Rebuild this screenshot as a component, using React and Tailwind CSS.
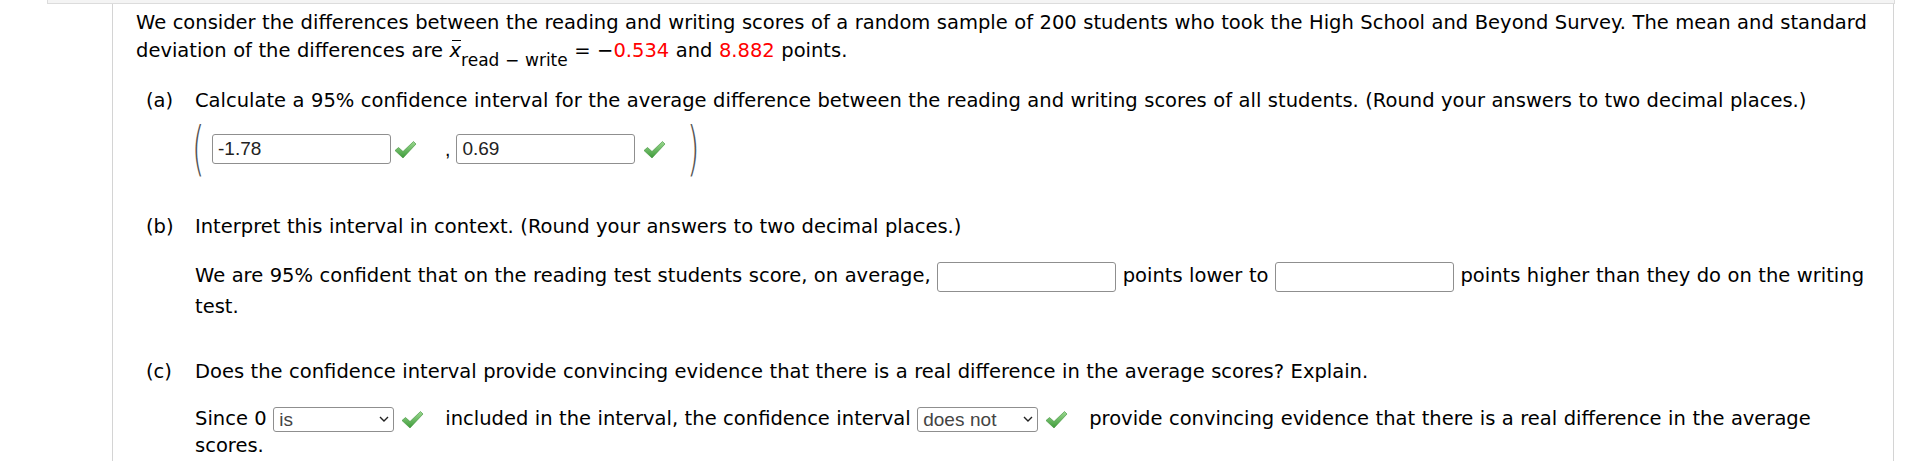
import React from "react";

const Check = () => (
  <svg width="23" height="19" viewBox="0 0 23 19" className="inline-block align-middle">
    <defs>
      <linearGradient id="chk" x1="0" y1="0" x2="0" y2="1">
        <stop offset="0" stopColor="#9ad88f" />
        <stop offset="1" stopColor="#3e9b3a" />
      </linearGradient>
    </defs>
    <path
      d="M1 10.5 L4.5 7.5 L9 11.5 L19.5 1.5 L22 4 L9 18 Z"
      fill="url(#chk)"
      stroke="#3a8f36"
      strokeWidth="0.6"
      strokeLinejoin="round"
    />
  </svg>
);

const TextBox = ({ value }) => (
  <span className="inline-flex items-center align-middle w-[179px] h-[30px] border border-[#8f8f8f] rounded-[3px] bg-white px-[5px] text-[19px] text-[#222] font-['Liberation_Sans',Arial,sans-serif]">
    {value}
  </span>
);

const Dropdown = ({ value }) => (
  <span className="inline-flex items-center justify-between align-middle w-[121px] h-[25px] border border-[#8f8f8f] rounded-[3px] bg-white pl-[5px] pr-[3px] text-[19px] leading-[23px] text-[#444] font-['Liberation_Sans',Arial,sans-serif]">
    <span>{value}</span>
    <svg width="12" height="12" viewBox="0 0 12 12">
      <path d="M2 4 L6 8 L10 4" fill="none" stroke="#222" strokeWidth="1.4" />
    </svg>
  </span>
);

const Part = ({ label, question, children, answerClass }) => (
  <div className="flex">
    <div className="w-[59px] shrink-0 pl-[10px]">{label}</div>
    <div className="flex-1">
      <div>{question}</div>
      <div className={answerClass}>{children}</div>
    </div>
  </div>
);

const Paren = ({ children, className }) => (
  <span
    className={`inline-block w-[20px] origin-left scale-x-[0.55] text-[58px] leading-[50px] font-['DejaVu_Sans',sans-serif] font-extralight text-[#555] ${className}`}
  >
    {children}
  </span>
);

export default function App() {
  return (
    <div className="w-[1920px] h-[461px] overflow-hidden bg-white text-black text-[19.5px] leading-[28px] [word-spacing:0.3px] font-['DejaVu_Sans',Verdana,sans-serif]">
      <div className="ml-[47px] w-[1848px] h-[4px] bg-[#f4f4f4] border-b border-l border-r border-[#dcdcdc]" />
      <div className="ml-[112px] w-[1782px] h-[457px] border-l border-r border-[#d4d4d4] pl-[23px] pr-[24px] pt-[5px]">
        <p>
          We consider the differences between the reading and writing scores of a random sample of 200 students who
          took the High School and Beyond Survey. The mean and standard deviation of the differences are{" "}
          <span className="relative inline-block">
            <span className="italic">x</span>
            <span className="absolute left-[2px] top-[3px] w-[9px] border-t border-black" />
          </span>
          <span className="relative top-[9px] text-[17px]">read − write</span> = −
          <span className="text-[#ff0000]">0.534</span> and <span className="text-[#ff0000]">8.882</span> points.
        </p>

        <div className="mt-[22px]">
          <Part
            label="(a)"
            question="Calculate a 95% confidence interval for the average difference between the reading and writing scores of all students. (Round your answers to two decimal places.)"
            answerClass="mt-[9px] flex items-center h-[50px]"
          >
            <Paren className="-ml-[3px]">(</Paren>
            <TextBox value="-1.78" />
            <span className="ml-[3px] flex">
              <Check />
            </span>
            <span className="ml-[28px] mr-[6px] font-['Liberation_Sans',Arial,sans-serif]">,</span>
            <TextBox value="0.69" />
            <span className="ml-[8px] flex">
              <Check />
            </span>
            <Paren className="ml-[21px]">)</Paren>
          </Part>
        </div>

        <div className="mt-[39px]">
          <Part
            label="(b)"
            question="Interpret this interval in context. (Round your answers to two decimal places.)"
            answerClass="mt-[20px] leading-[30px]"
          >
            We are 95% confident that on the reading test students score, on average, <TextBox value="" /> points lower
            to <TextBox value="" /> points higher than they do on the writing test.
          </Part>
        </div>

        <div className="mt-[36px]">
          <Part
            label="(c)"
            question="Does the confidence interval provide convincing evidence that there is a real difference in the average scores? Explain."
            answerClass="mt-[19px] leading-[27px]"
          >
            Since 0 <Dropdown value="is" />
            <span className="ml-[7px] mr-[21px]">
              <Check />
            </span>
            included in the interval, the confidence interval <Dropdown value="does not" />
            <span className="ml-[7px] mr-[21px]">
              <Check />
            </span>
            provide convincing evidence that there is a real difference in the average scores.
          </Part>
        </div>
      </div>
    </div>
  );
}
